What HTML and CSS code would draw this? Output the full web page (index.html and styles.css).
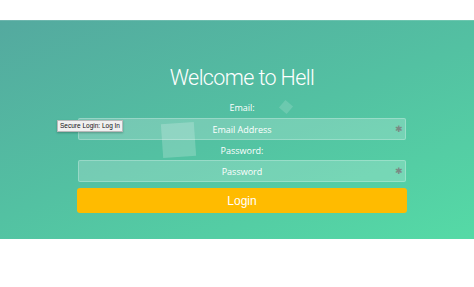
FILE: index.html
```html
<!DOCTYPE html>
<html>
<head>
<meta charset="utf-8">
<link rel="stylesheet" href="styles.css">
</head>
<body>
<div class="hero">
  <span class="bubble bubble-big"></span>
  <span class="bubble bubble-small"></span>
  <form class="form">
    <h1 class="title">Welcome to Hell</h1>
    <label class="label label-email">Email:</label>
    <div class="field field-email">
      <input class="input" type="text" placeholder="Email Address">
      <span class="req">&#x2731;</span>
    </div>
    <label class="label label-pass">Password:</label>
    <div class="field field-pass">
      <input class="input" type="password" placeholder="Password">
      <span class="req">&#x2731;</span>
    </div>
    <button class="btn" type="button">Login</button>
  </form>
  <div class="tooltip">Secure Login: Log In</div>
</div>
</body>
</html>
```
FILE: styles.css
```css
html, body {
  margin: 0;
  padding: 0;
  background: #ffffff;
}
body {
  font-family: "Open Sans", "Liberation Sans", sans-serif;
}
.hero {
  position: relative;
  margin-top: 20px;
  height: 219px;
  overflow: hidden;
  background: linear-gradient(160deg, #54a99f 0%, #53c1a2 50%, #55daa6 100%);
  box-shadow: inset 0 1px 0 rgba(255,255,255,0.15);
}
.form {
  width: 330px;
  margin: 0 0 0 77px;
  padding-top: 42px;
  display: flex;
  flex-direction: column;
  align-items: center;
  position: relative;
  z-index: 1;
}
.title {
  margin: 0;
  font-family: "Roboto", sans-serif;
  font-weight: 300;
  font-size: 21.5px;
  line-height: 32px;
  letter-spacing: -0.6px;
  color: #ffffff;
}
.label {
  font-size: 9px;
  line-height: 12px;
  color: #ffffff;
}
.label-email { margin-top: 8px; }
.label-pass { margin-top: 5px; }
.field {
  position: relative;
  width: 328px;
}
.field-email { margin-top: 4px; }
.field-pass { margin-top: 3px; }
.input {
  box-sizing: border-box;
  display: block;
  width: 100%;
  height: 22px;
  margin: 0;
  padding: 0 14px;
  border: 1px solid rgba(255,255,255,0.25);
  border-radius: 2px;
  background: rgba(255,255,255,0.2);
  color: #ffffff;
  font-family: "Open Sans", sans-serif;
  font-size: 9px;
  text-align: center;
  outline: none;
}
.input::placeholder {
  color: #ffffff;
  opacity: 1;
}
.req {
  position: absolute;
  right: 3px;
  top: 5px;
  font-size: 9px;
  line-height: 12px;
  color: #7b8a85;
}
.btn {
  margin-top: 6px;
  width: 330px;
  height: 25px;
  border: 0;
  border-radius: 3px;
  background: #ffbb00;
  color: #ffffff;
  font-family: "Liberation Sans", sans-serif;
  font-size: 12px;
  padding: 0;
}
.bubble {
  position: absolute;
  background: rgba(255,255,255,0.2);
  z-index: 2;
  pointer-events: none;
}
.bubble-big {
  left: 162px;
  top: 103px;
  width: 33px;
  height: 34px;
  transform: rotate(-4deg);
}
.bubble-small {
  left: 281px;
  top: 82px;
  width: 10px;
  height: 10px;
  transform: rotate(40deg);
  background: rgba(255,255,255,0.15);
}
.tooltip {
  position: absolute;
  left: 57px;
  top: 100px;
  z-index: 3;
  padding: 1px 2px;
  background: #f0f0f0;
  border: 1px solid #b8b8b8;
  box-shadow: 0 1px 2px rgba(0,0,0,0.25);
  font-family: "Liberation Sans", sans-serif;
  font-size: 6.5px;
  line-height: 8px;
  color: #111111;
}
```
